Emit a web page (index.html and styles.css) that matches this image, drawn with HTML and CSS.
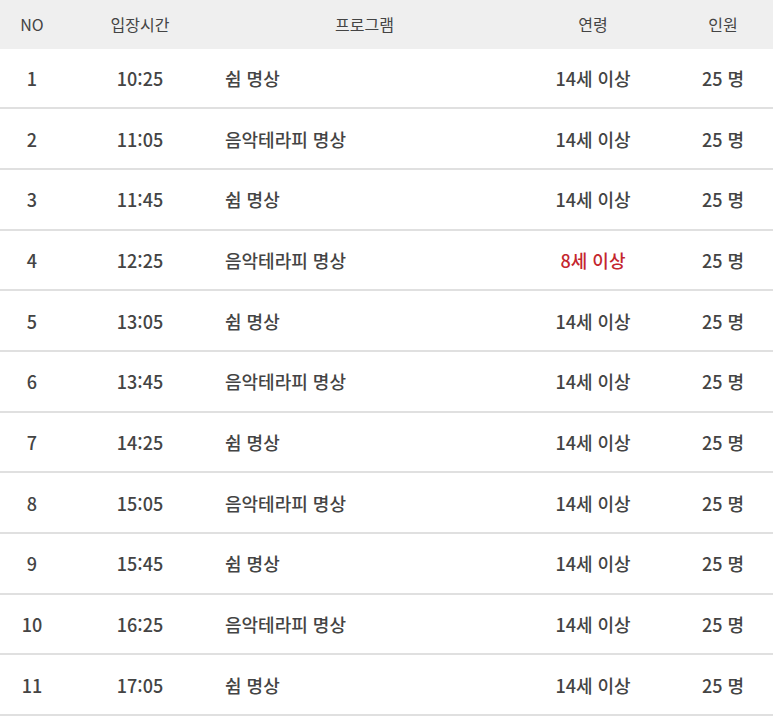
FILE: index.html
```html
<!DOCTYPE html>
<html lang="ko">
<head>
<meta charset="utf-8">
<link rel="stylesheet" href="styles.css">
</head>
<body>
<table class="schedule">
  <colgroup>
    <col class="c-no"><col class="c-time"><col class="c-prog"><col class="c-age"><col class="c-cap">
  </colgroup>
  <thead>
    <tr><th>NO</th><th>입장시간</th><th>프로그램</th><th>연령</th><th>인원</th></tr>
  </thead>
  <tbody>
    <tr><td>1</td><td>10:25</td><td class="prog">쉼 명상</td><td>14세 이상</td><td>25 명</td></tr>
    <tr><td>2</td><td>11:05</td><td class="prog">음악테라피 명상</td><td>14세 이상</td><td>25 명</td></tr>
    <tr><td>3</td><td>11:45</td><td class="prog">쉼 명상</td><td>14세 이상</td><td>25 명</td></tr>
    <tr><td>4</td><td>12:25</td><td class="prog">음악테라피 명상</td><td class="red">8세 이상</td><td>25 명</td></tr>
    <tr><td>5</td><td>13:05</td><td class="prog">쉼 명상</td><td>14세 이상</td><td>25 명</td></tr>
    <tr><td>6</td><td>13:45</td><td class="prog">음악테라피 명상</td><td>14세 이상</td><td>25 명</td></tr>
    <tr><td>7</td><td>14:25</td><td class="prog">쉼 명상</td><td>14세 이상</td><td>25 명</td></tr>
    <tr><td>8</td><td>15:05</td><td class="prog">음악테라피 명상</td><td>14세 이상</td><td>25 명</td></tr>
    <tr><td>9</td><td>15:45</td><td class="prog">쉼 명상</td><td>14세 이상</td><td>25 명</td></tr>
    <tr><td>10</td><td>16:25</td><td class="prog">음악테라피 명상</td><td>14세 이상</td><td>25 명</td></tr>
    <tr><td>11</td><td>17:05</td><td class="prog">쉼 명상</td><td>14세 이상</td><td>25 명</td></tr>
  </tbody>
</table>
</body>
</html>
```
FILE: styles.css
```css
html, body {
  margin: 0;
  padding: 0;
  background: #ffffff;
}
body {
  font-family: "Noto Sans CJK KR", "Noto Sans", sans-serif;
  color: #333333;
}
.schedule {
  width: 773px;
  border-collapse: collapse;
  table-layout: fixed;
}
.c-no { width: 64px; }
.c-time { width: 152px; }
.c-prog { width: 297px; }
.c-age { width: 160px; }
.c-cap { width: 100px; }
.schedule th {
  height: 48.5px;
  padding: 0;
  background: #efefef;
  font-size: 16px;
  font-weight: 400;
  color: #444444;
  text-align: center;
  vertical-align: middle;
}
.schedule td {
  height: 58.7px;
  padding: 0;
  border-bottom: 2px solid #e0e0e0;
  font-size: 18px;
  font-weight: 500;
  color: #444444;
  text-align: center;
  vertical-align: middle;
}
.schedule td.prog {
  text-align: left;
  padding-left: 9px;
}
.schedule td.red {
  color: #c4262e;
}
```
